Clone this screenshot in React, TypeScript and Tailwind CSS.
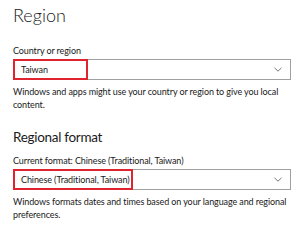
import React from "react";

function Chevron() {
  return (
    <svg width="8" height="5" viewBox="0 0 8 5" className="shrink-0">
      <path d="M0.5 0.8 L4 4.2 L7.5 0.8" fill="none" stroke="#777" strokeWidth="1" />
    </svg>
  );
}

function Dropdown({ value, redWidth }: { value: string; redWidth: number }) {
  return (
    <div className="relative mr-[9px] h-[21px] border border-[#a0a0a0] bg-white flex items-center pl-[7px] pr-[8px]">
      <span className="flex-1 text-[9px] tracking-[-0.1px] text-[#1a1a1a]">{value}</span>
      <Chevron />
      <div
        className="absolute -left-px -top-px h-[21px] border-2 border-solid border-[#e0242f]"
        style={{ width: redWidth }}
      />
    </div>
  );
}

export default function App() {
  return (
    <div
      className="w-[300px] h-[226px] bg-white overflow-hidden pl-[13px] text-[#1a1a1a]"
      style={{ fontFamily: 'Lato, "Noto Sans", sans-serif' }}
    >
      <h1 className="pt-[3px] text-[18px] leading-[24px] font-light">Region</h1>
      <div className="mt-[17px] text-[9px] tracking-[-0.1px] leading-[13px]">Country or region</div>
      <div className="mt-[2px]">
        <Dropdown value="Taiwan" redWidth={75} />
      </div>
      <p className="mt-[6px] mr-[10px] text-[9px] tracking-[-0.1px] leading-[12.5px]">
        Windows and apps might use your country or region to give you local content.
      </p>
      <h2 className="mt-[17px] text-[13.5px] tracking-[-0.3px] leading-[18px]">Regional format</h2>
      <div className="mt-[8px] text-[9px] tracking-[-0.1px] leading-[13px]">
        Current format: Chinese (Traditional, Taiwan)
      </div>
      <div className="mt-[2px]">
        <Dropdown value="Chinese (Traditional, Taiwan)" redWidth={120} />
      </div>
      <p className="mt-[6px] mr-[10px] text-[9px] tracking-[-0.1px] leading-[12.5px]">
        Windows formats dates and times based on your language and regional preferences.
      </p>
    </div>
  );
}
